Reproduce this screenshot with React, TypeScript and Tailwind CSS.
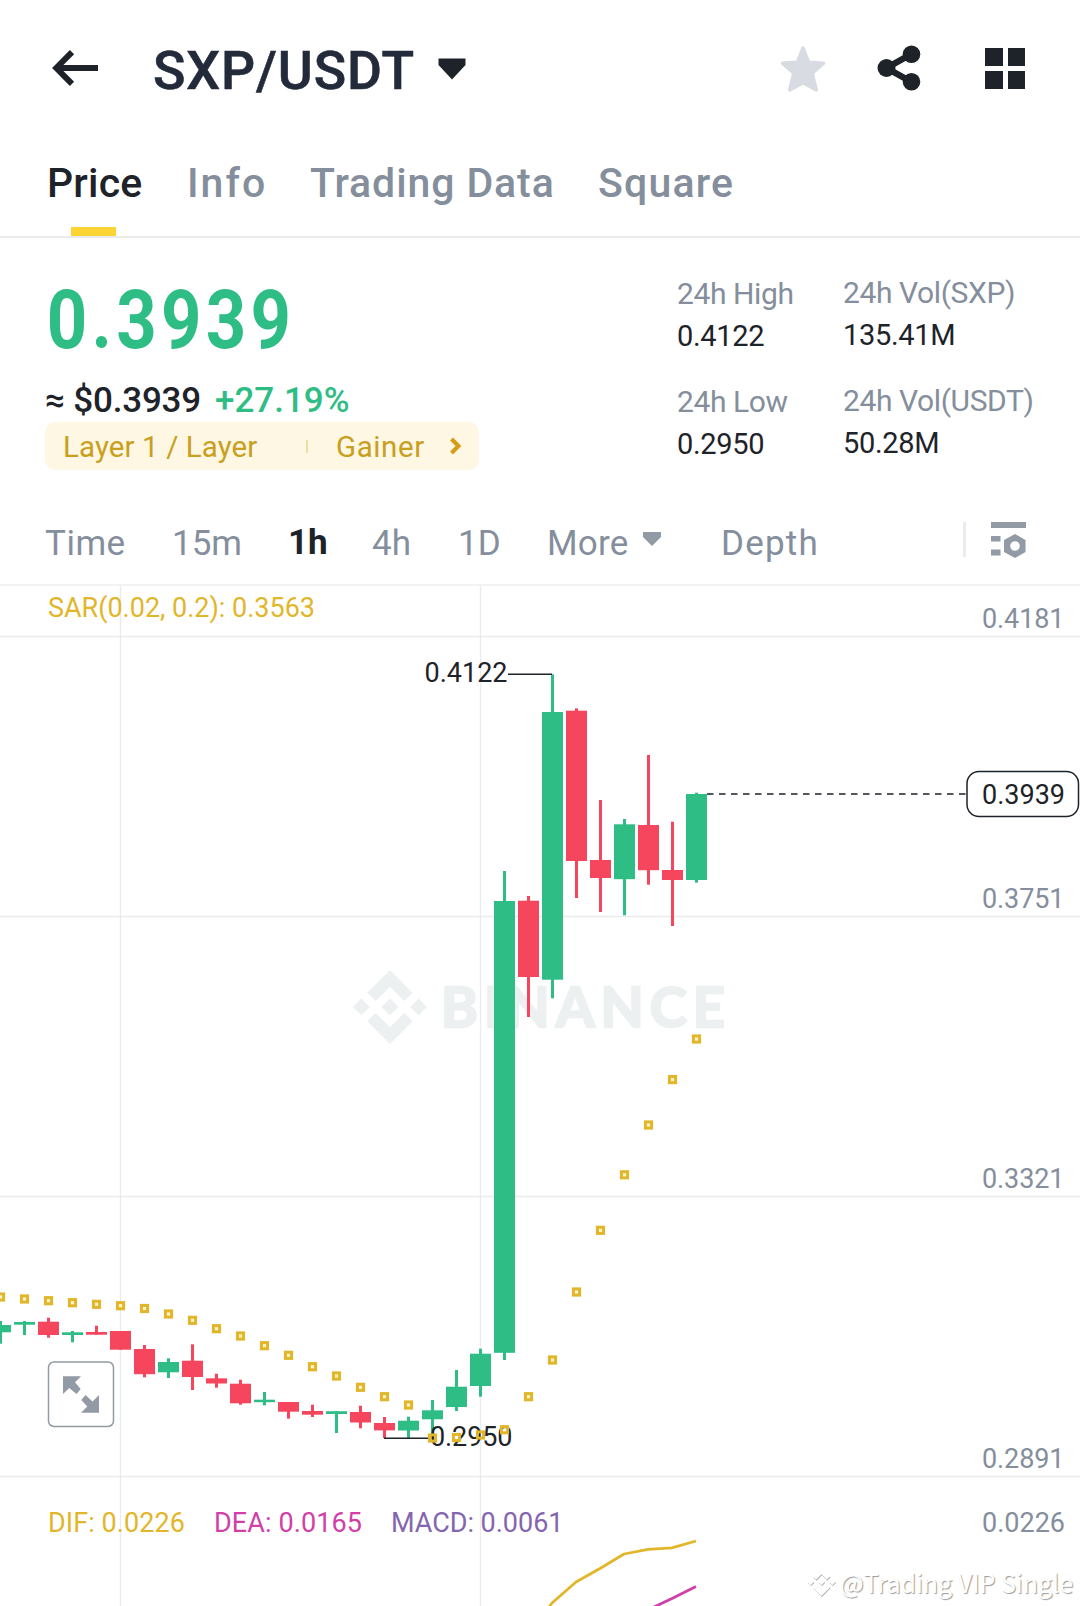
import React from "react";

const GREEN = "#2ebd85";
const RED = "#f6465d";
const GOLD = "#e2b62a";

type Candle = [x: number, up: 0 | 1, bodyTop: number, bodyBottom: number, high: number, low: number];

const candles: Candle[] = [
  [0, 1, 1325, 1332.3, 1321, 1343.7],
  [24, 1, 1322, 1324.7, 1321, 1335],
  [48, 0, 1321.7, 1335, 1317.7, 1337.7],
  [72, 1, 1332.3, 1335, 1331, 1342.3],
  [96, 0, 1332, 1334.7, 1325.7, 1334.7],
  [120, 0, 1331, 1349.7, 1331, 1349.7],
  [144, 0, 1349, 1374.2, 1345, 1377.3],
  [168, 1, 1362, 1372.3, 1358.3, 1378],
  [192, 0, 1360.7, 1377, 1344.3, 1390],
  [216, 0, 1378.3, 1383.5, 1373.7, 1387.7],
  [240, 0, 1383.7, 1403.3, 1379.7, 1404.7],
  [264, 1, 1399.7, 1402.2, 1392, 1405.3],
  [288, 0, 1402, 1411.7, 1402, 1418.7],
  [312, 0, 1411, 1414.7, 1404.7, 1417],
  [336, 1, 1411.2, 1414, 1411.2, 1433],
  [360, 0, 1412, 1422.5, 1405.7, 1428.3],
  [384, 0, 1423, 1430.4, 1417, 1438],
  [408, 1, 1420.7, 1430.5, 1416.7, 1438],
  [432, 1, 1410.3, 1419.3, 1400, 1436],
  [456, 1, 1386.7, 1407, 1370, 1411],
  [480, 1, 1353.7, 1386, 1348.7, 1396.7],
  [504, 1, 901, 1352.8, 871, 1360],
  [528, 0, 900.7, 977, 896, 1017],
  [552, 1, 712, 979.7, 674.3, 998.3],
  [576, 0, 710.7, 861, 708.3, 898],
  [600, 0, 860, 878, 800, 912],
  [624, 1, 824.3, 879.2, 819, 915.3],
  [648, 0, 825, 870.2, 755, 884.7],
  [672, 0, 870, 880, 821.7, 926],
  [696, 1, 794, 880, 792.7, 882.7],
];

const sar = [
  1297, 1299, 1300.7, 1302.7, 1304.3, 1305.7, 1308.5, 1314, 1320.3, 1328.7, 1336, 1345.7, 1355.3,
  1366.7, 1376, 1387.3, 1396.7, 1405, 1438, 1437.5, 1435, 1429.7, 1396.7, 1360, 1292, 1230.3,
  1174.8, 1125, 1079.6, 1039,
];

const LOGO =
  "M16.624 13.9202l2.7175 2.7154-7.353 7.353-7.353-7.352 2.7175-2.7164 4.6355 4.6595 4.6356-4.6595zm4.6366-4.6366L24 12l-2.7154 2.7164L18.5682 12l2.6924-2.7164zm-9.272.001l2.7163 2.6914-2.7164 2.7174v-.001L9.2721 12l2.7164-2.7154zm-9.2722-.001L5.4088 12l-2.6914 2.6924L0 12l2.7164-2.7164zM11.9885.0115l7.353 7.329-2.7174 2.7154-4.6356-4.6356-4.6355 4.6595-2.7174-2.7154 7.353-7.353z";

function Header() {
  return (
    <header className="flex h-[136px] shrink-0 items-center pl-[52px] pr-[55px]">
      <svg className="h-[36px] w-[46px] shrink-0" viewBox="0 0 46 36" fill="none" stroke="#1e2329" strokeWidth="6">
        <path d="M20 2.200 4.300 18 20 33.800M4 18H46" strokeLinejoin="miter" />
      </svg>
      <h1 className="ml-[55px] mt-[5px] w-[285px] whitespace-nowrap text-[53.5px] font-medium leading-[60px] tracking-[0.9px] text-[#232b3b] [-webkit-text-stroke:0.6px_#232b3b]">
        SXP/USDT
      </h1>
      <svg className="mt-[1px] h-[22px] w-[28px] shrink-0" viewBox="0 0 28 22">
        <path d="M0.500 0.500H27.500V7L14 21.500 0.500 7Z" fill="#1e2329" />
      </svg>
      <div className="ml-auto flex items-center">
        <svg className="mt-[2px] h-[48px] w-[46px]" viewBox="0 0 46 48">
          <path
            d="M23 3 28.600 17.200 43.500 18.300 32.200 28.200 36.300 45 23 37.600 9.700 45 13.800 28.200 2.500 18.300 17.400 17.200Z"
            fill="#d8dbe1"
            stroke="#d8dbe1"
            strokeWidth="3.500"
            strokeLinejoin="round"
          />
        </svg>
        <svg className="ml-[51px] h-[46px] w-[44px]" viewBox="0 0 44 46" fill="#1e2329">
          <path d="M34.500 9 9.500 23 34.500 37" fill="none" stroke="#1e2329" strokeWidth="6.500" />
          <circle cx="34.500" cy="9.200" r="8.800" />
          <circle cx="9.500" cy="23" r="9" />
          <circle cx="34.500" cy="36.800" r="8.800" />
        </svg>
        <div className="ml-[64px] grid h-[41px] w-[40px] grid-cols-2 grid-rows-2 gap-[5px]">
          <i className="bg-[#1e2329]" />
          <i className="bg-[#1e2329]" />
          <i className="bg-[#1e2329]" />
          <i className="bg-[#1e2329]" />
        </div>
      </div>
    </header>
  );
}

function Tabs() {
  return (
    <nav className="flex h-[102px] shrink-0 border-b-2 border-[#eaebed] pl-[46px] pt-[22px] text-[41px] font-medium leading-[50px] text-[#848e9c]">
      <div className="flex w-[141px] flex-col text-[#1e2329]">
        <span className="pl-[1px] tracking-[0.2px]">Price</span>
        <i className="ml-[25px] mt-[19px] h-[9px] w-[45px] bg-[#fcd535]" />
      </div>
      <span className="w-[123px] tracking-[2px]">Info</span>
      <span className="w-[288px] whitespace-nowrap tracking-[0.9px]">Trading Data</span>
      <span className="tracking-[1.2px]">Square</span>
    </nav>
  );
}

function Stat({ label, value }: { label: string; value: string }) {
  return (
    <div className="whitespace-nowrap leading-[36px]">
      <div className="text-[30px] tracking-[-0.4px] text-[#848e9c]">{label}</div>
      <div className="mt-[6px] text-[29px] tracking-[-0.3px] text-[#1e2329]">{value}</div>
    </div>
  );
}

function Summary() {
  return (
    <section className="flex h-[256px] shrink-0 pl-[45px]">
      <div className="w-[632px] pt-[40px]">
        <div className="w-[300px] origin-left scale-x-[0.86] pl-[2px] text-[82px] font-bold leading-[84px] tracking-[5px] text-[#2ebd85]">
          0.3939
        </div>
        <div className="mt-[18px] flex whitespace-nowrap text-[35px] font-medium leading-[42px]">
          <span className="w-[170px] tracking-[-0.2px] text-[#1e2329]">≈ $0.3939</span>
          <span className="text-[#2ebd85]">+27.19%</span>
        </div>
        <div className="flex h-[48px] w-[434px] items-center rounded-[10px] bg-[#fdf7e3] pl-[18px] text-[29.5px] text-[#c99f1e]">
          <span className="mt-[2px] w-[243px] whitespace-nowrap tracking-[0.1px]">Layer 1 / Layer</span>
          <i className="h-[13px] w-[2px] bg-[#efdca5]" />
          <span className="ml-[28px] mt-[2px] w-[114px] tracking-[0.6px]">Gainer</span>
          <svg className="h-[18px] w-[12px]" viewBox="0 0 12 18" fill="none" stroke="#d69c13" strokeWidth="4">
            <path d="M1.500 2 8.500 9 1.500 16" />
          </svg>
        </div>
      </div>
      <div className="flex w-[166px] flex-col gap-[30px] pt-[38px]">
        <Stat label="24h High" value="0.4122" />
        <Stat label="24h Low" value="0.2950" />
      </div>
      <div className="flex flex-col gap-[30px] pt-[37px]">
        <Stat label="24h Vol(SXP)" value="135.41M" />
        <Stat label="24h Vol(USDT)" value="50.28M" />
      </div>
    </section>
  );
}

function Intervals() {
  return (
    <div className="flex h-[92px] shrink-0 items-center border-b-2 border-[#f0f2f3] pl-[45px] text-[35px] text-[#848e9c]">
      <span className="mt-[10px] w-[127px] tracking-[0.5px]">Time</span>
      <span className="mt-[10px] w-[116px]">15m</span>
      <span className="mt-[9px] w-[84px] font-bold text-[#1e2329]">1h</span>
      <span className="mt-[10px] w-[86px]">4h</span>
      <span className="mt-[10px] w-[89px]">1D</span>
      <span className="mt-[10px] w-[96px] tracking-[0.2px]">More</span>
      <svg className="h-[14px] w-[18px]" viewBox="0 0 18 14">
        <path d="M0 0H18V5L9 14 0 5Z" fill="#929aa5" />
      </svg>
      <span className="ml-[60px] mt-[10px] tracking-[1.2px]">Depth</span>
      <i className="ml-auto h-[35px] w-[3px] bg-[#eaecef]" />
      <svg className="ml-[25px] mr-[54px] mt-[2px] h-[36px] w-[35px]" viewBox="0 0 35 36" fill="#929aa5">
        <path d="M0 0H35V6H0ZM0 14H9.500V19.500H0ZM0 27.500H9.500V33.500H0Z" />
        <path
          fillRule="evenodd"
          d="M24 12 34.500 18V30L24 36 13 30V18ZM24 19.200A4.800 4.800 0 1 0 24 28.800 4.800 4.800 0 1 0 24 19.200Z"
        />
      </svg>
    </div>
  );
}

function Chart() {
  return (
    <div className="relative h-[1020px] shrink-0">
      <svg className="block h-[1020px] w-[1080px]" viewBox="0 586 1080 1020" fontSize="27">
        <path
          d="M120.500 586V1606M480.500 586V1606M0 636.500H1080M0 916.500H1080M0 1196.500H1080M0 1476.500H1080"
          stroke="#e9ebee"
          strokeWidth="1.300"
          fill="none"
        />
        <g fill="#edf0f0">
          <path d={LOGO} transform="translate(353 970) scale(3.083)" />
          <text x="441" y="1027" fontFamily="Lato" fontWeight="700" fontSize="56" textLength="284" stroke="#edf0f0" strokeWidth="2.500">
            BINANCE
          </text>
        </g>
        {candles.map(([x, up, top, bottom, high, low]) => (
          <g key={x} fill={up ? GREEN : RED}>
            <rect x={x - 1} y={high} width="3" height={low - high} />
            <rect x={x - 10} y={top} width="21" height={bottom - top} />
          </g>
        ))}
        <path d="M508 674.300H552M384 1438.300H430" stroke="#1e2329" strokeWidth="1.500" />
        <path d="M707 794H966" stroke="#1e2329" strokeWidth="1.600" strokeDasharray="6.500 5.500" />
        <g fill="#1e2329">
          <text x="424.500" y="682" textLength="83">0.4122</text>
          <text x="430" y="1446" textLength="82.500">0.2950</text>
        </g>
        {sar.map((y, i) => (
          <rect key={i} x={i * 24 - 2.600} y={y - 3.100} width="6.200" height="6.200" fill="#fff6c8" fillOpacity={y > 1425 ? 0 : 1} stroke={GOLD} strokeWidth="3" />
        ))}
        <text x="48" y="616.700" fill={GOLD} textLength="267">SAR(0.02, 0.2): 0.3563</text>
        <text x="48" y="1532" fill={GOLD} textLength="137">DIF: 0.0226</text>
        <text x="214" y="1532" fill="#d13fa7" textLength="148">DEA: 0.0165</text>
        <text x="391" y="1532" fill="#8566ae" textLength="172.500">MACD: 0.0061</text>
        <g fill="#848e9c">
          <text x="982" y="627.700" textLength="82.500">0.4181</text>
          <text x="982" y="908" textLength="82.500">0.3751</text>
          <text x="982" y="1188" textLength="82.500">0.3321</text>
          <text x="982" y="1468" textLength="82.500">0.2891</text>
          <text x="982" y="1532" textLength="83">0.0226</text>
        </g>
        <rect x="967" y="771.500" width="111.500" height="45" rx="12" fill="#fff" stroke="#1e2329" strokeWidth="1.500" />
        <text x="982" y="804" fill="#1e2329" textLength="83">0.3939</text>
        <g fill="none" strokeWidth="2.800" strokeLinejoin="round">
          <path d="M549 1607 552 1603 576 1582 600 1568.500 624 1554 648 1549.300 672 1547.800 696 1541" stroke={GOLD} />
          <path d="M654 1607 672 1598.500 696 1586.500" stroke="#cf3fa6" />
        </g>
        <rect x="48.500" y="1362" width="65" height="64.500" rx="5.500" fill="#fff" stroke="#929aa5" strokeWidth="1.500" />
        <g fill="#929aa5">
          <path d="M63 1376.300H81L75 1382.300 80.700 1389 76.500 1394 69.300 1388 63 1394Z" />
          <path d="M99 1412.700H81L87.300 1406.500 81.300 1400 85.500 1395 92.500 1401.500 99 1395Z" />
        </g>
      </svg>
      <div className="absolute bottom-[8px] right-[7px] flex items-center gap-[4px] text-white">
        <svg className="h-[28px] w-[29px] overflow-visible" viewBox="0 0 24 24">
          <path d={LOGO} fill="#a9a9a9" transform="translate(.4 .8)" />
          <path d={LOGO} fill="#fff" />
        </svg>
        <span className="whitespace-nowrap font-['Noto_Sans_CJK_SC','Noto_Sans',sans-serif] text-[25px] leading-[32px] [text-shadow:1px_1px_1px_#999]">
          @Trading VIP Single
        </span>
      </div>
    </div>
  );
}

export default function App() {
  return (
    <main className="flex h-[1606px] w-[1080px] flex-col overflow-hidden bg-white font-[Roboto,sans-serif]">
      <Header />
      <Tabs />
      <Summary />
      <Intervals />
      <Chart />
    </main>
  );
}
